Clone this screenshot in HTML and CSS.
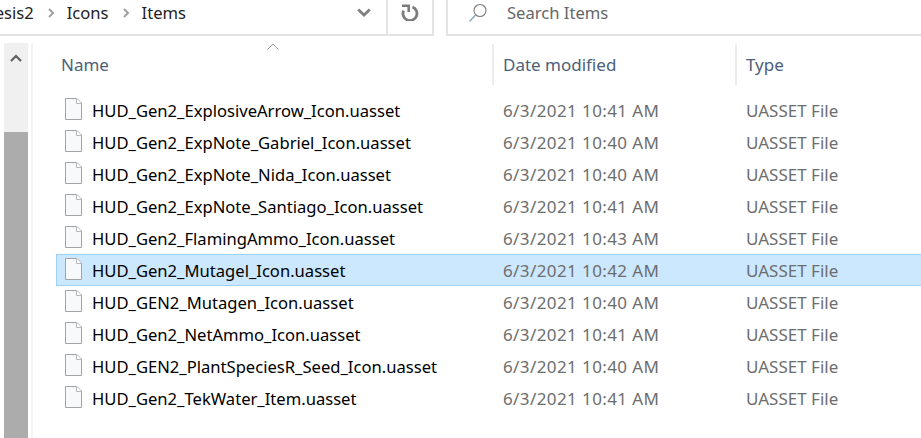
FILE: index.html
```html
<!DOCTYPE html>
<html lang="en">
<head>
    <meta charset="UTF-8">
    <title>Items</title>
    <link rel="stylesheet" href="styles.css">
</head>
<body>

<svg class="defs" width="0" height="0">
    <symbol id="file" viewBox="0 0 17 22">
        <path d="M0.5 0.5H12L16.5 5V21.5H0.5Z" fill="#f8f9fa" stroke="#a3a3a3"/>
        <path d="M11.5 0.5V5.5H16.5" fill="#fff" stroke="#b8b8b8"/>
    </symbol>
</svg>

<div class="toolbar">
    <div class="path">
        <span class="crumb first">Genesis2</span>
        <svg class="sep" width="8" height="10" viewBox="0 0 8 10"><path d="M2 1L6 5L2 9" fill="none" stroke="#a0a0a0" stroke-width="2"/></svg>
        <span class="crumb">Icons</span>
        <svg class="sep" width="8" height="10" viewBox="0 0 8 10"><path d="M2 1L6 5L2 9" fill="none" stroke="#a0a0a0" stroke-width="2"/></svg>
        <span class="crumb">Items</span>
        <svg class="drop" width="14" height="9" viewBox="0 0 14 9"><path d="M1.2 1.5L7 7L12.8 1.5" fill="none" stroke="#808080" stroke-width="2.8"/></svg>
    </div>
    <div class="refresh">
        <svg width="18" height="17" viewBox="0 0 18 17"><path d="M11.5 3A7 7 0 1 1 2.6 6.6" fill="none" stroke="#7c7c7c" stroke-width="2.8"/><path d="M1 1.7H7.7V8" fill="none" stroke="#7c7c7c" stroke-width="2.6"/></svg>
    </div>
    <div class="gap"></div>
    <div class="search">
        <svg width="20" height="20" viewBox="0 0 20 20"><circle cx="12" cy="7.5" r="6" fill="none" stroke="#7d7d7d" stroke-width="1.1"/><path d="M7.7 11.8L1.5 18.5" fill="none" stroke="#86a5c6" stroke-width="1.4"/></svg>
        <span>Search Items</span>
    </div>
</div>

<div class="main">
    <div class="scrollbar">
        <div class="arrow">
            <svg width="12" height="8" viewBox="0 0 12 8"><path d="M1 7L6 2L11 7" fill="none" stroke="#606060" stroke-width="2.2"/></svg>
        </div>
        <div class="thumb"></div>
    </div>
    <div class="pane">
        <svg class="sort" width="12" height="7" viewBox="0 0 12 7"><path d="M0.5 6.5L6 1L11.5 6.5" fill="none" stroke="#a0a0a0"/></svg>
        <div class="head">
            <div class="col col-name">Name</div>
            <div class="col col-date">Date modified</div>
            <div class="col col-type">Type</div>
        </div>
        <div class="rows">
            <div class="row"><svg class="icon"><use href="#file"/></svg><span class="name">HUD_Gen2_ExplosiveArrow_Icon.uasset</span><span class="date">6/3/2021 10:41 AM</span><span class="type">UASSET File</span></div>
            <div class="row"><svg class="icon"><use href="#file"/></svg><span class="name">HUD_Gen2_ExpNote_Gabriel_Icon.uasset</span><span class="date">6/3/2021 10:40 AM</span><span class="type">UASSET File</span></div>
            <div class="row"><svg class="icon"><use href="#file"/></svg><span class="name">HUD_Gen2_ExpNote_Nida_Icon.uasset</span><span class="date">6/3/2021 10:40 AM</span><span class="type">UASSET File</span></div>
            <div class="row"><svg class="icon"><use href="#file"/></svg><span class="name">HUD_Gen2_ExpNote_Santiago_Icon.uasset</span><span class="date">6/3/2021 10:41 AM</span><span class="type">UASSET File</span></div>
            <div class="row"><svg class="icon"><use href="#file"/></svg><span class="name">HUD_Gen2_FlamingAmmo_Icon.uasset</span><span class="date">6/3/2021 10:43 AM</span><span class="type">UASSET File</span></div>
            <div class="row selected"><svg class="icon"><use href="#file"/></svg><span class="name">HUD_Gen2_Mutagel_Icon.uasset</span><span class="date">6/3/2021 10:42 AM</span><span class="type">UASSET File</span></div>
            <div class="row"><svg class="icon"><use href="#file"/></svg><span class="name">HUD_GEN2_Mutagen_Icon.uasset</span><span class="date">6/3/2021 10:40 AM</span><span class="type">UASSET File</span></div>
            <div class="row"><svg class="icon"><use href="#file"/></svg><span class="name">HUD_Gen2_NetAmmo_Icon.uasset</span><span class="date">6/3/2021 10:41 AM</span><span class="type">UASSET File</span></div>
            <div class="row"><svg class="icon"><use href="#file"/></svg><span class="name">HUD_GEN2_PlantSpeciesR_Seed_Icon.uasset</span><span class="date">6/3/2021 10:40 AM</span><span class="type">UASSET File</span></div>
            <div class="row"><svg class="icon"><use href="#file"/></svg><span class="name">HUD_Gen2_TekWater_Item.uasset</span><span class="date">6/3/2021 10:41 AM</span><span class="type">UASSET File</span></div>
        </div>
    </div>
</div>

</body>
</html>
```

FILE: styles.css
```css
body {
    margin: 0;
    width: 921px;
    height: 438px;
    overflow: hidden;
    background-color: #fff;
    font-family: "Noto Sans", sans-serif;
    font-size: 16.6px;
    color: #000;
}

.defs {
    position: absolute;
}

/* Górny pasek */
.toolbar {
    display: flex;
    height: 36px;
}

.path {
    width: 386px;
    display: flex;
    align-items: center;
    padding-bottom: 9px;
    border-bottom: 2px solid #e3e3e3;
    overflow: hidden;
    box-sizing: border-box;
    color: #222;
}

.crumb.first {
    margin-left: -37px;
}

.sep {
    margin: 0 12px 0 13px;
}

.drop {
    margin-left: auto;
    margin-right: 15px;
}

.refresh {
    width: 44px;
    height: 25px;
    display: flex;
    align-items: center;
    justify-content: center;
    padding-bottom: 9px;
    border-left: 2px solid #e3e3e3;
    border-right: 2px solid #e3e3e3;
    border-bottom: 2px solid #e3e3e3;
}

.gap {
    width: 12px;
}

.search {
    flex: 1;
    display: flex;
    align-items: center;
    gap: 19px;
    padding: 0 0 9px 20px;
    border-left: 2px solid #e3e3e3;
    border-bottom: 2px solid #e3e3e3;
    color: #666;
}

/* Lista plików */
.main {
    display: flex;
    height: 402px;
}

.scrollbar {
    width: 24px;
    margin: 7px 0 0 4px;
    display: flex;
    flex-direction: column;
    background-color: #f0f0f0;
}

.arrow {
    height: 89px;
    display: flex;
    justify-content: center;
    padding-top: 11px;
    box-sizing: border-box;
}

.thumb {
    flex: 1;
    background-color: #acacac;
}

.pane {
    flex: 1;
    position: relative;
    margin: 7px 0 0 3px;
    border-left: 2px solid #f3f3f3;
}

.sort {
    position: absolute;
    top: 0;
    left: 234px;
}

.head {
    display: flex;
    height: 41px;
    padding-top: 1px;
    font-size: 17px;
    color: #4c607a;
}

.col {
    display: flex;
    align-items: center;
    box-sizing: border-box;
}

.col-name {
    width: 461px;
    padding-left: 28px;
    border-right: 2px solid #ececec;
}

.col-date {
    width: 243px;
    padding-left: 9px;
    border-right: 2px solid #ececec;
}

.col-type {
    padding-left: 9px;
}

.rows {
    margin: 9px 0 0 23px;
}

.row {
    display: flex;
    align-items: center;
    height: 32px;
    box-sizing: border-box;
    border: 1px solid transparent;
    color: #6d6d6d;
}

.row.selected {
    background-color: #cce8ff;
    border-color: #99d1ff;
    border-right: 0;
}

.icon {
    width: 17px;
    height: 22px;
    margin: -3px 0 0 8px;
    flex: none;
}

.name {
    width: 421px;
    padding-left: 10px;
    box-sizing: border-box;
    color: #000;
    white-space: nowrap;
}

.date {
    width: 243px;
    font-size: 17px;
    letter-spacing: 0.4px;
    white-space: nowrap;
}

.type {
    font-size: 17px;
    white-space: nowrap;
}
```
